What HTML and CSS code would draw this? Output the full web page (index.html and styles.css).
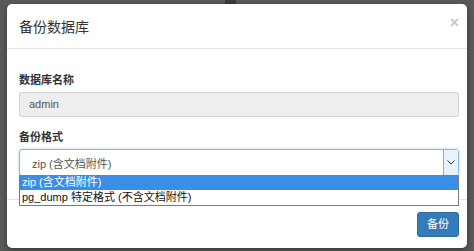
FILE: index.html
```html
<!DOCTYPE html>
<html lang="zh-CN">
<head>
<meta charset="utf-8">
<link rel="stylesheet" href="styles.css">
</head>
<body>
<div class="behind"></div>
<div class="modal">
  <div class="modal-header">
    <div class="modal-title">备份数据库</div>
    <div class="close">×</div>
  </div>
  <div class="modal-body">
    <div class="label">数据库名称</div>
    <div class="input">admin</div>
    <div class="label label-2">备份格式</div>
    <div class="select-wrap">
      <div class="select">
        <span class="select-text">zip (含文档附件)</span>
        <span class="arrow"><svg width="8" height="5" viewBox="0 0 8 5"><polyline points="0.5,0.5 4,4 7.5,0.5" fill="none" stroke="#333" stroke-width="1"/></svg></span>
      </div>
      <div class="options">
        <div class="option selected">zip (含文档附件)</div>
        <div class="option">pg_dump 特定格式 (不含文档附件)</div>
      </div>
    </div>
  </div>
  <div class="modal-footer">
    <div class="btn">备份</div>
  </div>
</div>
</body>
</html>
```

FILE: styles.css
```css
html, body {
  margin: 0;
  padding: 0;
}
body {
  background: #5a5a5a;
  width: 474px;
  height: 251px;
  overflow: hidden;
  font-family: "Liberation Sans", "Noto Sans CJK SC", sans-serif;
  color: #333;
}
.behind {
  width: 11px;
  height: 4px;
  margin-left: 225px;
  background: #3b3b3b;
}
.modal {
  margin: 0 0 0 7px;
  width: 460px;
  height: 244px;
  background: #fff;
  border-radius: 5px;
  box-shadow: 0 2px 6px rgba(0,0,0,0.4);
  display: flex;
  flex-direction: column;
}
.modal-header {
  height: 44px;
  border-bottom: 1px solid #e5e5e5;
  display: flex;
  align-items: center;
  justify-content: space-between;
  padding: 0 8px 0 12px;
}
.modal-title {
  font-size: 14px;
  line-height: 18px;
  color: #333;
  padding-top: 1px;
}
.close {
  font-size: 16px;
  font-weight: bold;
  color: #c8c8c8;
  line-height: 16px;
  margin-top: -6px;
}
.modal-body {
  padding: 24px 8px 24px 12px;
  height: 102px;
}
.label {
  font-size: 11px;
  font-weight: bold;
  line-height: 15px;
  color: #333;
  margin-bottom: 4px;
}
.label-2 {
  margin-top: 13px;
}
.input {
  box-sizing: border-box;
  width: 440px;
  height: 25px;
  background: #eeeeee;
  border: 1px solid #d4d4d4;
  border-radius: 3px;
  font-size: 11px;
  line-height: 23px;
  padding-left: 9px;
  color: #555;
}
.select-wrap {
  position: relative;
  width: 440px;
}
.select {
  box-sizing: border-box;
  height: 27px;
  border: 1px solid #84b8e6;
  border-radius: 3px;
  box-shadow: 0 0 3px rgba(102,175,233,0.5);
  display: flex;
  align-items: center;
  justify-content: space-between;
  padding-left: 12px;
  font-size: 11px;
  color: #555;
}
.arrow {
  box-sizing: border-box;
  width: 15px;
  height: 25px;
  background: #e8f2fb;
  border-left: 1px solid #7fb2e2;
  display: flex;
  align-items: center;
  justify-content: center;
}
.options {
  position: absolute;
  top: 26px;
  left: 0;
  width: 440px;
  box-sizing: border-box;
  border: 1px solid #7a7a7a;
  border-top: none;
  background: #fff;
}
.option {
  height: 15px;
  line-height: 15px;
  font-size: 11px;
  padding-left: 2px;
  color: #111;
}
.option.selected {
  background: #3a8ee6;
  color: #fff;
}
.modal-footer {
  border-top: 1px solid #e5e5e5;
  display: flex;
  justify-content: flex-end;
  padding: 12px 8px 0 0;
}
.btn {
  width: 42px;
  height: 25px;
  background: #357bb8;
  border: 1px solid #2e6da4;
  box-sizing: border-box;
  border-radius: 3px;
  color: #fff;
  font-size: 11px;
  line-height: 23px;
  text-align: center;
}
```
